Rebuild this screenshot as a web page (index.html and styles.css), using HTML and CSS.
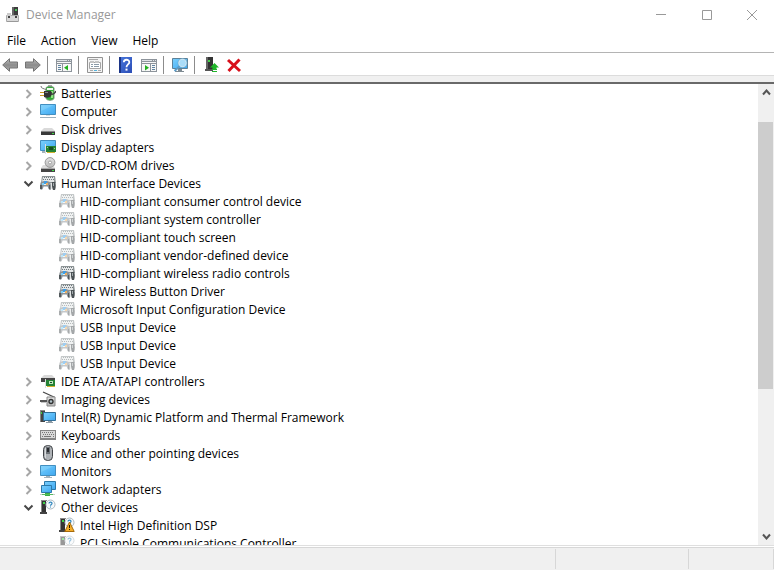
FILE: index.html
```html
<!DOCTYPE html>
<html lang="en">
<head>
    <meta charset="UTF-8">
    <meta name="viewport" content="width=device-width, initial-scale=1.0">
    <title>Device Manager</title>
    <link rel="stylesheet" href="styles.css">
</head>
<body>
    <!-- icon sprite, all icons are 16x16 -->
    <svg class="sprite" aria-hidden="true">
        <defs>
            <linearGradient id="blue" x1="0" y1="0" x2="1" y2="1">
                <stop offset="0" stop-color="#7bcffc"/>
                <stop offset=".5" stop-color="#5bbcf8"/>
                <stop offset="1" stop-color="#3fa6ee"/>
            </linearGradient>
            <linearGradient id="gray" x1="0" y1="0" x2="0" y2="1">
                <stop offset="0" stop-color="#bdbdbd"/>
                <stop offset=".5" stop-color="#8c8c8c"/>
                <stop offset="1" stop-color="#b0b0b0"/>
            </linearGradient>
            <linearGradient id="help-blue" x1="0" y1="0" x2="1" y2="1">
                <stop offset="0" stop-color="#4a78dd"/>
                <stop offset="1" stop-color="#2a4cb5"/>
            </linearGradient>
            <linearGradient id="metal" x1="0" y1="0" x2="0" y2="1">
                <stop offset="0" stop-color="#e4e4e4"/>
                <stop offset="1" stop-color="#b9b9b9"/>
            </linearGradient>
        </defs>
        <symbol id="i-app" viewBox="0 0 16 16">
            <path d="M7 0h6v10H7z" fill="#3c3c3c"/>
            <path d="M7 0h2v10H7z" fill="#666"/>
            <path d="M10 2h2v2h-2z" fill="#49c05a"/>
            <path d="M1.500 8.500h12v6h-12z" fill="#d9d9d9" stroke="#aaa"/>
            <path d="M2 6h4v3H2z" fill="#ccc"/>
            <path d="M3 9h2v2H3zM10 9h2v2h-2z" fill="#444"/>
            <path d="M2 14h11v1H2z" fill="#999"/>
        </symbol>
        <symbol id="i-back" viewBox="0 0 16 16">
            <path d="M.7 8 7.500 1.700V5h8v6h-8v3.300z" fill="url(#gray)" stroke="#747474"/>
        </symbol>
        <symbol id="i-forward" viewBox="0 0 16 16">
            <path d="M15.300 8 8.500 1.700V5h-8v6h8v3.300z" fill="url(#gray)" stroke="#747474"/>
        </symbol>
        <symbol id="i-tree" viewBox="0 0 16 16" shape-rendering="crispEdges">
            <path d="M0 2h16v13H0z" fill="#8d949b"/>
            <path d="M1 5h14v1H1zM1 7h5v7H1zM7 7h8v7H7z" fill="#f7f7f7"/>
            <path d="M1 3h10v1H1zM12 3h1v1h-1zM14 3h1v1h-1z" fill="#dfe3e6"/>
            <path d="M2 8h3v1H2zM2 10h3v1H2zM2 12h3v1H2z" fill="#5f83a0"/>
            <path d="M12 8v5.500L8 10.700z" fill="#22b01f" shape-rendering="auto"/>
        </symbol>
        <symbol id="i-properties" viewBox="0 0 16 16">
            <path d="M.5.5h15v15H.5z" fill="#f4f4f4" stroke="#929292"/>
            <path d="M2 2h9v1H2zM3 13h3v1H3zM11 13h3v1h-3z" fill="#aaa"/>
            <path d="M7 13h3v1H7z" fill="#52b3dd"/>
            <path d="M2.500 5.500h11v6h-11z" fill="#fff" stroke="#a5a5a5"/>
            <path d="M3 4h4v2H3zM8 4h4v2H8z" fill="#c4c4c4"/>
            <path d="M4 7h2v1H4zM7 7h5v1H7zM4 9h2v1H4zM7 9h5v1H7z" fill="#8a9aa7"/>
        </symbol>
        <symbol id="i-help" viewBox="0 0 16 16">
            <path d="M1 0h13v16H1z" fill="url(#help-blue)"/>
            <path d="M1 0h2v16H1z" fill="#1c3587"/>
            <path d="M5.800 5.300C5.800 1.900 11.300 1.900 11.300 5.200c0 2.300-2.800 2.200-2.800 5" fill="none" stroke="#fff" stroke-width="1.800"/>
            <path d="M7.500 11.600h2v2h-2z" fill="#fff"/>
        </symbol>
        <symbol id="i-action-pane" viewBox="0 0 16 16" shape-rendering="crispEdges">
            <path d="M0 2h16v13H0z" fill="#8d949b"/>
            <path d="M1 5h14v1H1zM1 7h8v7H1zM10 7h5v7h-5z" fill="#f7f7f7"/>
            <path d="M1 3h10v1H1zM12 3h1v1h-1zM14 3h1v1h-1z" fill="#dfe3e6"/>
            <path d="M11 8h3v1h-3zM11 10h3v1h-3zM11 12h3v1h-3z" fill="#5f83a0"/>
            <path d="M4 8v5.500l4-2.800z" fill="#22b01f" shape-rendering="auto"/>
        </symbol>
        <symbol id="i-scan" viewBox="0 0 16 16">
            <path d="M.5 1.500h15v10H.5z" fill="url(#blue)" stroke="#5d8198"/>
            <path d="M6 12h4v2H6zM3 14h9v1H3z" fill="#7d8a92"/>
            <circle cx="10.500" cy="6" r="4" fill="#a9dcf8" stroke="#e3f2fa"/>
            <circle cx="10.500" cy="6" r="4.500" fill="none" stroke="#6aa3c3" stroke-width=".6"/>
            <path d="m7.500 9.200-5 4.800" stroke="#5b9cc8" stroke-width="2"/>
        </symbol>
        <symbol id="i-update" viewBox="0 0 16 16">
            <path d="M3 0h7v12H3z" fill="#333"/>
            <path d="M3 0h2v12H3z" fill="#666"/>
            <path d="M5 3h2v2H5z" fill="#45d24a"/>
            <path d="M2 12h8v2H2z" fill="#555"/>
            <path d="m11.500 6 4.500 4.500h-2.500V12h-4v-1.500H7z" fill="#20b62a"/>
            <path d="M9 12h5v1H9zM9 14h5v1H9z" fill="#20b62a"/>
        </symbol>
        <symbol id="i-remove" viewBox="0 0 16 16">
            <path d="M2 3 14 14M13.500 2.500 2.500 14" stroke="#d8101b" stroke-width="3"/>
        </symbol>
        <symbol id="i-battery" viewBox="0 0 16 16">
            <path d="M8 0h4v2H8z" fill="#a8a8a8"/>
            <path d="M6 3c0-2 8-2 8 0v10c0 3-8 3-8 0z" fill="#2fae33" stroke="#78967a"/>
            <path d="M7 3h6v2H7z" fill="#eef8ec"/>
            <path d="M11 6h2v7h-2z" fill="#8fe583"/>
            <path d="M1 1c0 3 3 2 5 4" fill="none" stroke="#777"/>
            <path d="M4 6h3c5-1 6 2 4 5-1 2-5 2-7 1z" fill="#333"/>
            <path d="M5 7h3v1H5z" fill="#888"/>
            <path d="M0 7h4v1H0zM0 10h4v1H0z" fill="#c79a23"/>
            <path d="M11 9c3 1 4-1 5-3" fill="none" stroke="#444" stroke-width="1.500"/>
        </symbol>
        <symbol id="i-computer" viewBox="0 0 16 16">
            <path d="M.5 1.500h15v10H.5z" fill="url(#blue)" stroke="#438fc0"/>
            <path d="M1 2h13L1 8z" fill="#8ad5fb" opacity=".5"/>
            <path d="M6 12h4v1H6z" fill="#d5dde2"/>
            <path d="M0 14h16v1H0z" fill="#9db0bd"/>
        </symbol>
        <symbol id="i-monitor" viewBox="0 0 16 16">
            <path d="M.5 2.500h15v10H.5z" fill="url(#blue)" stroke="#438fc0"/>
            <path d="M1 3h13L1 9z" fill="#8ad5fb" opacity=".5"/>
            <path d="M6 13h4v1H6zM4 14h8v1H4z" fill="#a4b2bb"/>
        </symbol>
        <symbol id="i-disk" viewBox="0 0 16 16">
            <path d="M4 7h8l3 3H1z" fill="#dadada"/>
            <path d="M1 10h14v4H1z" fill="#393939"/>
            <path d="M1 10h14v1H1z" fill="#888"/>
            <path d="M12 12h2v1h-2z" fill="#3edb45"/>
        </symbol>
        <symbol id="i-display" viewBox="0 0 16 16">
            <path d="M.5 1.500h15v10H.5z" fill="url(#blue)" stroke="#438fc0"/>
            <path d="M2 12h3v2H2z" fill="#a4b2bb"/>
            <path d="M6 7h10v6H6z" fill="#258335"/>
            <path d="M5 5h1v10H5z" fill="#ddd"/>
            <path d="M9 8h4v3H9z" fill="#174d25"/>
            <path d="M7 13h8v1H7z" fill="#d3b332"/>
            <path d="M7 8h1v1H7zM14 9h1v1h-1z" fill="#9bd58b"/>
        </symbol>
        <symbol id="i-dvd" viewBox="0 0 16 16">
            <path d="M3 8h10l2 3H1z" fill="#ddd"/>
            <circle cx="10" cy="5.500" r="4.900" fill="url(#metal)" stroke="#999"/>
            <circle cx="10" cy="5.500" r="1.500" fill="#fff" stroke="#a0a0a0"/>
            <path d="M1 11h14v4H1z" fill="#454545"/>
            <path d="M1 11h14v1H1z" fill="#aaa"/>
            <path d="M12 13h2v1h-2z" fill="#3edb45"/>
        </symbol>
        <!-- keyboard behind a gamepad and a joystick -->
        <symbol id="i-hid" viewBox="0 0 16 16">
            <path d="M2 1h13l1 7H1z" fill="#8d9496"/>
            <path d="M3 2h11v5H2z" fill="#e3e6e7"/>
            <path d="M4 2h1v1H4zM6 2h1v1H6zM8 2h1v1H8zM10 2h1v1h-1zM12 2h1v1h-1zM3 4h1v1H3zM5 4h1v1H5zM7 4h1v1H7zM9 4h1v1H9zM11 4h1v1h-1zM13 4h1v1h-1z" fill="#71797c"/>
            <path d="M1 7c2-1.500 7-1.500 9 0 1 1.500 1.500 6 1 7.500-1.500 1-2.500 0-3.300-3H3.600C3 14 2 15.500.5 14.500c-.8-1.500-.5-6 .5-7.500z" fill="#8c9397"/>
            <path d="M0 10h2v4H0zM9 10h1v4H9z" fill="#53595c"/>
            <path d="M4 6h3v3H4z" fill="#419de2"/>
            <path d="M2 8h2v2H2z" fill="#7fd0f5"/>
            <path d="M6 8h2v2H6z" fill="#eeb060"/>
            <path d="M4 9h2v1H4z" fill="#e9edef"/>
            <path d="M12 7h3c1 1 1 6 0 8h-2c-1-2-1.500-6-1-8z" fill="#4b5255"/>
            <path d="M11 8h1v6h-1z" fill="#e3e6e7"/>
            <path d="M13 8h1v3h-1z" fill="#a2aaad"/>
        </symbol>
        <symbol id="i-ide" viewBox="0 0 16 16">
            <path d="M4 2h8l3 3H1z" fill="#d9d9d9"/>
            <path d="M1 5h14v4H1z" fill="#454545"/>
            <path d="M6 7h9v6H6z" fill="#258335"/>
            <path d="M5 6h1v9H5z" fill="#ddd"/>
            <path d="M9 8h4v3H9z" fill="#bfe5bd"/>
            <path d="M10 9h2v1h-2z" fill="#174d25"/>
            <path d="M7 13h8v1H7z" fill="#d3b332"/>
        </symbol>
        <symbol id="i-imaging" viewBox="0 0 16 16">
            <path d="M3 1 15 6.500" stroke="#484848" stroke-width="1.300"/>
            <path d="M7 6h8v9H7z" fill="url(#metal)" stroke="#888"/>
            <path d="M0 9h7v2H0z" fill="#555"/>
            <path d="M1 11h6v1H1z" fill="#c5c5c5"/>
            <circle cx="11" cy="10.500" r="2.700" fill="#333"/>
            <circle cx="11" cy="10.500" r="1.200" fill="#b2c3ca"/>
        </symbol>
        <symbol id="i-thermal" viewBox="0 0 16 16">
            <path d="M0 1h5v12H0z" fill="#444"/>
            <path d="M0 1h1v12H0zM1 1h4v1H1z" fill="#888"/>
            <path d="M1 3h1v2H1z" fill="#38d443"/>
            <path d="M3.500 3.500h12v8h-12z" fill="url(#blue)" stroke="#326e97"/>
            <path d="M8 12h4v1H8zM6 13h7v1H6z" fill="#8e9ba4"/>
        </symbol>
        <symbol id="i-keyboard" viewBox="0 0 16 16" shape-rendering="crispEdges">
            <path d="M0 3h16v10H0z" fill="#858585"/>
            <path d="M1 4h14v7H1z" fill="#d9d9d9"/>
            <path d="M2 5h1v1H2zM4 5h1v1H4zM6 5h1v1H6zM8 5h1v1H8zM10 5h1v1h-1zM12 5h1v1h-1zM3 7h1v1H3zM5 7h1v1H5zM7 7h1v1H7zM9 7h1v1H9zM11 7h1v1h-1zM13 7h1v1h-1zM2 9h1v1H2zM4 9h7v1H4zM13 9h1v1h-1z" fill="#777"/>
        </symbol>
        <symbol id="i-mouse" viewBox="0 0 16 16">
            <rect x="3.500" y=".5" width="9" height="15" rx="4" fill="#aeb2b6" stroke="#404347"/>
            <path d="M6 2h4v7H6z" fill="#6d7277"/>
            <path d="M7 3h2v4H7z" fill="#292c30"/>
            <path d="M5 3h1v10H5z" fill="#d7dadc"/>
        </symbol>
        <symbol id="i-network" viewBox="0 0 16 16">
            <path d="M4.500.5h11v8h-11z" fill="url(#blue)" stroke="#2c79a9"/>
            <path d="M1.500 4.500h10v7h-10z" fill="url(#blue)" stroke="#2c79a9"/>
            <path d="M6 12h3v1H6z" fill="#999"/>
            <path d="M0 13h15v1H0z" fill="#c6cdc7"/>
            <path d="M5 12h5v3H5z" fill="#3aaf44"/>
            <path d="M2 13h11v1H2z" fill="#55ba5d"/>
        </symbol>
        <symbol id="i-unknown" viewBox="0 0 16 16">
            <path d="M1 1h5v13H1z" fill="#343434"/>
            <path d="M1 1h1v13H1zM1 1h6v1H1z" fill="#888"/>
            <path d="M3 3h2v2H3z" fill="#3cd446"/>
            <path d="M0 13h7v2H0z" fill="#444"/>
            <circle cx="10.500" cy="5.500" r="4.500" fill="#f6f9fb" stroke="#adb9c1"/>
            <path d="M9 4.500c0-2 3.200-1.700 3 0-.1 1-1.500 1-1.500 2.200M10 8h1" fill="none" stroke="#3288bf" stroke-width="1.200"/>
        </symbol>
        <symbol id="i-warning" viewBox="0 0 16 16">
            <use href="#i-unknown"/>
            <path d="m10.500 5 4.700 9.500H5.800z" fill="#f4ac28" stroke="#a66b0b" stroke-linejoin="round"/>
            <path d="M10 8h1v3h-1zM10 12h1v1h-1z" fill="#2b1b00"/>
        </symbol>
        <symbol id="i-chevron" viewBox="0 0 16 16">
            <path d="m6.500 5 4 4-4 4" fill="none" stroke="#a6a6a6" stroke-width="2"/>
        </symbol>
        <symbol id="i-open" viewBox="0 0 16 16">
            <path d="m4.500 6.500 4 4 4-4" fill="none" stroke="#484848" stroke-width="2"/>
        </symbol>
    </svg>

    <div class="window">
        <header class="titlebar">
            <svg class="icon"><use href="#i-app"/></svg>
            <h1>Device Manager</h1>
            <div class="window-buttons">
                <button type="button" aria-label="Minimize"><svg viewBox="0 0 12 12"><path d="M1 5.500h10"/></svg></button>
                <button type="button" aria-label="Maximize"><svg viewBox="0 0 12 12"><path d="M1.500 1.500h9v9h-9z"/></svg></button>
                <button type="button" aria-label="Close"><svg viewBox="0 0 12 12"><path d="m1 1 10 10M11 1 1 11"/></svg></button>
            </div>
        </header>

        <nav class="menubar">
            <button type="button">File</button>
            <button type="button">Action</button>
            <button type="button">View</button>
            <button type="button">Help</button>
        </nav>

        <div class="toolbar" role="toolbar">
            <button type="button" aria-label="Back"><svg class="icon"><use href="#i-back"/></svg></button>
            <button type="button" aria-label="Forward"><svg class="icon"><use href="#i-forward"/></svg></button>
            <span class="separator"></span>
            <button type="button" aria-label="Show/Hide Console Tree"><svg class="icon"><use href="#i-tree"/></svg></button>
            <span class="separator"></span>
            <button type="button" aria-label="Properties"><svg class="icon"><use href="#i-properties"/></svg></button>
            <span class="separator"></span>
            <button type="button" aria-label="Help"><svg class="icon"><use href="#i-help"/></svg></button>
            <button type="button" aria-label="Show/Hide Action Pane"><svg class="icon"><use href="#i-action-pane"/></svg></button>
            <span class="separator"></span>
            <button type="button" aria-label="Scan for hardware changes"><svg class="icon"><use href="#i-scan"/></svg></button>
            <span class="separator"></span>
            <button type="button" aria-label="Update driver"><svg class="icon"><use href="#i-update"/></svg></button>
            <button type="button" aria-label="Uninstall device"><svg class="icon"><use href="#i-remove"/></svg></button>
        </div>

        <main class="content">
            <ul class="tree">
                <li><div class="row"><button type="button" aria-label="Expand"><svg class="icon"><use href="#i-chevron"/></svg></button><svg class="icon"><use href="#i-battery"/></svg><span>Batteries</span></div></li>
                <li><div class="row"><button type="button" aria-label="Expand"><svg class="icon"><use href="#i-chevron"/></svg></button><svg class="icon"><use href="#i-computer"/></svg><span>Computer</span></div></li>
                <li><div class="row"><button type="button" aria-label="Expand"><svg class="icon"><use href="#i-chevron"/></svg></button><svg class="icon"><use href="#i-disk"/></svg><span>Disk drives</span></div></li>
                <li><div class="row"><button type="button" aria-label="Expand"><svg class="icon"><use href="#i-chevron"/></svg></button><svg class="icon"><use href="#i-display"/></svg><span>Display adapters</span></div></li>
                <li><div class="row"><button type="button" aria-label="Expand"><svg class="icon"><use href="#i-chevron"/></svg></button><svg class="icon"><use href="#i-dvd"/></svg><span>DVD/CD-ROM drives</span></div></li>
                <li>
                    <div class="row"><button type="button" aria-label="Collapse"><svg class="icon"><use href="#i-open"/></svg></button><svg class="icon"><use href="#i-hid"/></svg><span>Human Interface Devices</span></div>
                    <ul>
                        <li class="row hidden-device"><svg class="icon"><use href="#i-hid"/></svg><span>HID-compliant consumer control device</span></li>
                        <li class="row hidden-device"><svg class="icon"><use href="#i-hid"/></svg><span>HID-compliant system controller</span></li>
                        <li class="row hidden-device"><svg class="icon"><use href="#i-hid"/></svg><span>HID-compliant touch screen</span></li>
                        <li class="row hidden-device"><svg class="icon"><use href="#i-hid"/></svg><span>HID-compliant vendor-defined device</span></li>
                        <li class="row"><svg class="icon"><use href="#i-hid"/></svg><span>HID-compliant wireless radio controls</span></li>
                        <li class="row"><svg class="icon"><use href="#i-hid"/></svg><span>HP Wireless Button Driver</span></li>
                        <li class="row hidden-device"><svg class="icon"><use href="#i-hid"/></svg><span>Microsoft Input Configuration Device</span></li>
                        <li class="row hidden-device"><svg class="icon"><use href="#i-hid"/></svg><span>USB Input Device</span></li>
                        <li class="row hidden-device"><svg class="icon"><use href="#i-hid"/></svg><span>USB Input Device</span></li>
                        <li class="row hidden-device"><svg class="icon"><use href="#i-hid"/></svg><span>USB Input Device</span></li>
                    </ul>
                </li>
                <li><div class="row"><button type="button" aria-label="Expand"><svg class="icon"><use href="#i-chevron"/></svg></button><svg class="icon"><use href="#i-ide"/></svg><span>IDE ATA/ATAPI controllers</span></div></li>
                <li><div class="row"><button type="button" aria-label="Expand"><svg class="icon"><use href="#i-chevron"/></svg></button><svg class="icon"><use href="#i-imaging"/></svg><span>Imaging devices</span></div></li>
                <li><div class="row"><button type="button" aria-label="Expand"><svg class="icon"><use href="#i-chevron"/></svg></button><svg class="icon"><use href="#i-thermal"/></svg><span>Intel(R) Dynamic Platform and Thermal Framework</span></div></li>
                <li><div class="row"><button type="button" aria-label="Expand"><svg class="icon"><use href="#i-chevron"/></svg></button><svg class="icon"><use href="#i-keyboard"/></svg><span>Keyboards</span></div></li>
                <li><div class="row"><button type="button" aria-label="Expand"><svg class="icon"><use href="#i-chevron"/></svg></button><svg class="icon"><use href="#i-mouse"/></svg><span>Mice and other pointing devices</span></div></li>
                <li><div class="row"><button type="button" aria-label="Expand"><svg class="icon"><use href="#i-chevron"/></svg></button><svg class="icon"><use href="#i-monitor"/></svg><span>Monitors</span></div></li>
                <li><div class="row"><button type="button" aria-label="Expand"><svg class="icon"><use href="#i-chevron"/></svg></button><svg class="icon"><use href="#i-network"/></svg><span>Network adapters</span></div></li>
                <li>
                    <div class="row"><button type="button" aria-label="Collapse"><svg class="icon"><use href="#i-open"/></svg></button><svg class="icon"><use href="#i-unknown"/></svg><span>Other devices</span></div>
                    <ul>
                        <li class="row"><svg class="icon"><use href="#i-warning"/></svg><span>Intel High Definition DSP</span></li>
                        <li class="row hidden-device"><svg class="icon"><use href="#i-unknown"/></svg><span>PCI Simple Communications Controller</span></li>
                    </ul>
                </li>
            </ul>
            <div class="scrollbar">
                <button type="button" aria-label="Scroll up"><svg viewBox="0 0 9 7"><path d="m1 5.500 3.500-4L8 5.500"/></svg></button>
                <div class="thumb"></div>
                <button type="button" class="down" aria-label="Scroll down"><svg viewBox="0 0 9 7"><path d="m1 1.500 3.500 4L8 1.500"/></svg></button>
            </div>
        </main>

        <footer class="statusbar">
            <span></span>
            <span></span>
            <span></span>
        </footer>
    </div>
</body>
</html>
```
FILE: styles.css
```css
* {
    box-sizing: border-box;
}
body {
    margin: 0;
    background: #fff;
    color: #000;
    font-family: "Open Sans", "Noto Sans", sans-serif;
    font-size: 12px;
    line-height: 18px;
}
button {
    display: flex;
    align-items: center;
    justify-content: center;
    margin: 0;
    padding: 0;
    border: 0;
    background: none;
    color: inherit;
    font: inherit;
}
ul {
    margin: 0;
    padding: 0;
    list-style: none;
}
.sprite {
    position: absolute;
    width: 0;
    height: 0;
}
.icon {
    display: block;
    flex: none;
    width: 16px;
    height: 16px;
}
.window {
    display: flex;
    flex-direction: column;
    height: 100vh;
}

/* title bar */
.titlebar {
    display: flex;
    align-items: center;
    height: 29px;
    padding-left: 5px;
}
.titlebar h1 {
    flex: 1;
    margin: 0 0 0 5px;
    color: #999;
    font-size: 12px;
    font-weight: normal;
}
.window-buttons {
    display: flex;
    height: 100%;
}
.window-buttons button {
    width: 46px;
}
.window-buttons button:last-child {
    width: 44px;
}
.window-buttons svg {
    width: 12px;
    height: 12px;
    fill: none;
    stroke: #999;
}

/* menu bar */
.menubar {
    display: flex;
    gap: 15px;
    height: 24px;
    padding: 0 7px;
    border-bottom: 1px solid #b4b4b4;
}

/* toolbar */
.toolbar {
    display: flex;
    align-items: center;
    gap: 7px;
    height: 31px;
    padding: 1px 2px 6px;
    border-bottom: 2px solid #696969;
    background: linear-gradient(#fff 22px, #dcdcdc 22px, #dcdcdc 23px, #f0f0f0 23px);
}
.separator {
    width: 1px;
    height: 18px;
    margin: 0 1px 0 -1px;
    background: #8c8c8c;
}

/* device tree */
.content {
    display: flex;
    flex: 1;
    min-height: 0;
    border-bottom: 1px solid #dfdfdf;
}
.tree {
    flex: 1;
    overflow: hidden;
    padding-left: 20px;
}
.row {
    display: flex;
    align-items: center;
    height: 18px;
    white-space: nowrap;
}
.row button {
    margin-right: 4px;
}
.row span {
    margin-left: 5px;
    padding-top: 2px;
}
.tree ul {
    padding-left: 39px;
}
.hidden-device .icon {
    opacity: .5;
}

/* scroll bar */
.scrollbar {
    display: grid;
    grid-template-rows: 17px 21fr 267fr 139fr 17px;
    width: 16px;
    background: #f0f0f0;
}
.scrollbar svg {
    width: 9px;
    height: 7px;
    fill: none;
    stroke: #555;
    stroke-width: 2;
}
.thumb {
    grid-row: 3;
    margin-right: 1px;
    background: #cdcdcd;
}
.down {
    grid-row: 5;
}

/* status bar */
.statusbar {
    display: grid;
    grid-template-columns: 1fr 133px 85px;
    height: 23px;
    margin-top: 1px;
    padding: 1px 0;
    border-top: 1px solid #d7d7d7;
    background: #f0f0f0;
}
.statusbar span {
    border-right: 1px solid #d7d7d7;
}
```
